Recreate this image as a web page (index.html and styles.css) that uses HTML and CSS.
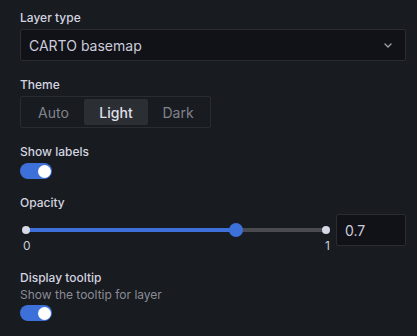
FILE: index.html
```html
<!DOCTYPE html>
<html>
<head>
<meta charset="utf-8">
<link rel="stylesheet" href="styles.css">
</head>
<body>
<div class="panel">
  <div class="field">
    <div class="label">Layer type</div>
    <div class="select">
      <span class="select-value">CARTO basemap</span>
      <svg class="chevron" width="8" height="5" viewBox="0 0 8 5"><path d="M1 1 L4 4 L7 1" fill="none" stroke="#a0a1a8" stroke-width="1.4" stroke-linecap="round" stroke-linejoin="round"/></svg>
    </div>
  </div>
  <div class="field">
    <div class="label">Theme</div>
    <div class="radio-group">
      <div class="radio r-auto">Auto</div>
      <div class="radio r-light active">Light</div>
      <div class="radio r-dark">Dark</div>
    </div>
  </div>
  <div class="field">
    <div class="label">Show labels</div>
    <div class="switch"><div class="knob"></div></div>
  </div>
  <div class="field">
    <div class="label">Opacity</div>
    <div class="slider-row">
      <div class="slider">
        <div class="rail">
          <div class="track"></div>
          <div class="dot dot-start"></div>
          <div class="dot dot-end"></div>
          <div class="thumb"></div>
        </div>
        <div class="marks"><span>0</span><span>1</span></div>
      </div>
      <div class="num-input">0.7</div>
    </div>
  </div>
  <div class="field">
    <div class="label">Display tooltip</div>
    <div class="desc">Show the tooltip for layer</div>
    <div class="switch"><div class="knob"></div></div>
  </div>
</div>
</body>
</html>
```
FILE: styles.css
```css
html, body {
  margin: 0;
  padding: 0;
  background: #181b1f;
}
body {
  font-family: Inter, "Noto Sans", sans-serif;
  color: #ccccdc;
  width: 417px;
  height: 336px;
  overflow: hidden;
}
.panel {
  padding: 10px 11px 0 20px;
}
.field {
  margin-bottom: 16px;
}
.label {
  font-size: 12px;
  font-weight: 500;
  line-height: 15px;
  margin-bottom: 4px;
  color: #d4d4e0;
}
.desc {
  font-size: 12px;
  line-height: 15px;
  color: rgba(204, 204, 220, 0.65);
  margin-top: -2px;
  margin-bottom: 3px;
}
.select {
  height: 32px;
  box-sizing: border-box;
  background: #111217;
  border: 1px solid #2a2c31;
  border-radius: 2px;
  display: flex;
  align-items: center;
  justify-content: space-between;
  padding: 0 13px 0 8px;
}
.select-value {
  font-size: 14px;
  color: #ccccdc;
}
.chevron {
  display: block;
}
.radio-group {
  display: inline-flex;
  height: 32px;
  box-sizing: border-box;
  border: 1px solid #2a2c31;
  border-radius: 2px;
  padding: 2px;
}
.radio {
  display: flex;
  align-items: center;
  justify-content: center;
  font-size: 14px;
  color: rgba(204, 204, 220, 0.6);
  border-radius: 2px;
}
.r-auto { width: 61px; }
.r-light { width: 64px; }
.r-dark { width: 60px; }
.radio.active {
  background: #2b2e33;
  color: #e0e0ea;
  font-weight: 500;
}
.switch {
  width: 32px;
  height: 16px;
  border-radius: 8px;
  background: #3d71d9;
  display: flex;
  align-items: center;
  justify-content: flex-end;
  padding: 0 1px;
  box-sizing: border-box;
}
.knob {
  width: 13px;
  height: 13px;
  border-radius: 50%;
  background: #ffffff;
}
.slider-row {
  display: flex;
  align-items: flex-start;
  height: 40px;
}
.slider {
  width: 316px;
  padding-top: 14px;
}
.rail {
  position: relative;
  height: 4px;
  margin: 0 0 0 6px;
  width: 300px;
  background: #4a4b50;
  border-radius: 2px;
}
.track {
  width: 210px;
  height: 4px;
  background: #3d71d9;
  border-radius: 2px;
}
.dot {
  position: absolute;
  top: -2px;
  width: 8px;
  height: 8px;
  border-radius: 50%;
  background: #d8d9e6;
}
.dot-start { left: -4px; }
.dot-end { left: 296px; }
.thumb {
  position: absolute;
  top: -5px;
  left: 203px;
  width: 14px;
  height: 14px;
  border-radius: 50%;
  background: #3d71d9;
}
.marks {
  display: flex;
  justify-content: space-between;
  width: 307px;
  padding-left: 3px;
  margin-top: 7px;
  font-size: 12px;
  line-height: 14px;
  color: #ccccdc;
}
.num-input {
  width: 70px;
  height: 32px;
  box-sizing: border-box;
  background: #111217;
  border: 1px solid #2a2c31;
  border-radius: 2px;
  font-size: 14px;
  color: #ccccdc;
  display: flex;
  align-items: center;
  padding-left: 8px;
}
```
